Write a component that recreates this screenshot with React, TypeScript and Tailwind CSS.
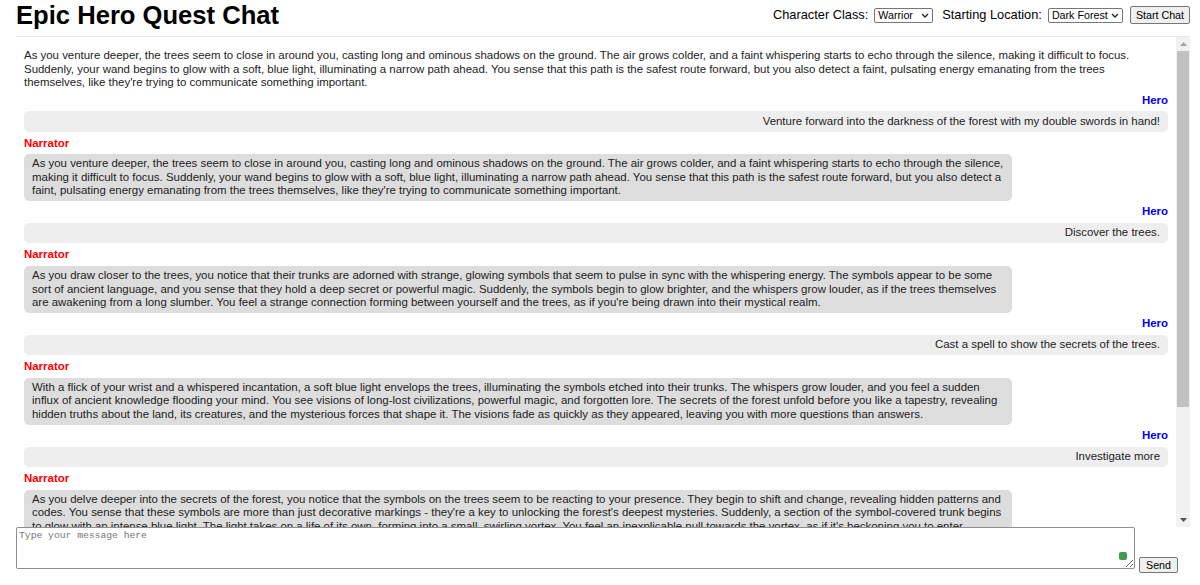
import React, { useState } from "react";

type Message = {
  sender: "hero" | "narrator" | "intro";
  text: string;
};

const opening =
  "As you venture deeper, the trees seem to close in around you, casting long and ominous shadows on the ground. The air grows colder, and a faint whispering starts to echo through the silence, making it difficult to focus. Suddenly, your wand begins to glow with a soft, blue light, illuminating a narrow path ahead. You sense that this path is the safest route forward, but you also detect a faint, pulsating energy emanating from the trees themselves, like they're trying to communicate something important.";

const history: Message[] = [
  { sender: "intro", text: opening },
  {
    sender: "hero",
    text: "Venture forward into the darkness of the forest with my double swords in hand!",
  },
  { sender: "narrator", text: opening },
  { sender: "hero", text: "Discover the trees." },
  {
    sender: "narrator",
    text: "As you draw closer to the trees, you notice that their trunks are adorned with strange, glowing symbols that seem to pulse in sync with the whispering energy. The symbols appear to be some sort of ancient language, and you sense that they hold a deep secret or powerful magic. Suddenly, the symbols begin to glow brighter, and the whispers grow louder, as if the trees themselves are awakening from a long slumber. You feel a strange connection forming between yourself and the trees, as if you're being drawn into their mystical realm.",
  },
  { sender: "hero", text: "Cast a spell to show the secrets of the trees." },
  {
    sender: "narrator",
    text: "With a flick of your wrist and a whispered incantation, a soft blue light envelops the trees, illuminating the symbols etched into their trunks. The whispers grow louder, and you feel a sudden influx of ancient knowledge flooding your mind. You see visions of long-lost civilizations, powerful magic, and forgotten lore. The secrets of the forest unfold before you like a tapestry, revealing hidden truths about the land, its creatures, and the mysterious forces that shape it. The visions fade as quickly as they appeared, leaving you with more questions than answers.",
  },
  { sender: "hero", text: "Investigate more" },
  {
    sender: "narrator",
    text: "As you delve deeper into the secrets of the forest, you notice that the symbols on the trees seem to be reacting to your presence. They begin to shift and change, revealing hidden patterns and codes. You sense that these symbols are more than just decorative markings - they're a key to unlocking the forest's deepest mysteries. Suddenly, a section of the symbol-covered trunk begins to glow with an intense blue light. The light takes on a life of its own, forming into a small, swirling vortex. You feel an inexplicable pull towards the vortex, as if it's beckoning you to enter.",
  },
  { sender: "hero", text: "Step into the vortex." },
  {
    sender: "narrator",
    text: "You take a deep breath and step into the swirling vortex. The world around you dissolves into a blur of light and color, and for a moment you feel weightless, as if you're floating through time itself. When the light fades, you find yourself standing in an ancient clearing, surrounded by towering stone pillars covered in the same glowing symbols.",
  },
];

const ChatMessage = ({ message }: { message: Message }) => {
  if (message.sender === "intro") {
    return <p className="mb-[4px] leading-[13.5px]">{message.text}</p>;
  }

  if (message.sender === "hero") {
    return (
      <div className="mb-[5px] flex flex-col">
        <span className="mb-[4px] text-right font-bold leading-[13.5px] text-[#0000ff]">
          Hero
        </span>
        <div className="rounded-[5px] bg-[#eeeeee] px-2 py-[3.5px] text-right leading-[13.5px]">
          {message.text}
        </div>
      </div>
    );
  }

  return (
    <div className="mb-[4.5px] flex flex-col">
      <span className="mb-[4px] font-bold leading-[13.5px] text-[#ff0000]">
        Narrator
      </span>
      <div className="max-w-[988px] rounded-[5px] bg-[#dddddd] px-2 py-[3.2px] leading-[13.5px]">
        {message.text}
      </div>
    </div>
  );
};

const Chevron = () => (
  <svg
    width="8"
    height="5"
    viewBox="0 0 8 5"
    className="pointer-events-none absolute right-[4px] top-[5px]"
  >
    <path d="M1 1 L4 4 L7 1" fill="none" stroke="#222" strokeWidth="1.3" />
  </svg>
);

interface PickerProps {
  value: string;
  options: string[];
  width: string;
  onChange: (value: string) => void;
}

const Picker = ({ value, options, width, onChange }: PickerProps) => (
  <div className={`relative ${width}`}>
    <select
      value={value}
      onChange={(e) => onChange(e.target.value)}
      className="block h-[15px] w-full appearance-none rounded-[2px] border border-[#767676] bg-white pl-[3px] text-[10.7px] leading-[13px]"
    >
      {options.map((option) => (
        <option key={option}>{option}</option>
      ))}
    </select>
    <Chevron />
  </div>
);

// classic gray scrollbar next to the log
const ScrollRail = () => (
  <div className="flex w-[14px] flex-col bg-[#f1f1f1]">
    <div className="flex h-[14px] items-center justify-center">
      <svg width="7" height="4" viewBox="0 0 7 4">
        <path d="M0 4 L3.5 0 L7 4 Z" fill="#a3a3a3" />
      </svg>
    </div>
    <div className="mx-[1px] h-[356px] bg-[#c1c1c1]" />
    <div className="flex-1" />
    <div className="flex h-[14px] items-center justify-center">
      <svg width="7" height="4" viewBox="0 0 7 4">
        <path d="M0 0 L3.5 4 L7 0 Z" fill="#505050" />
      </svg>
    </div>
  </div>
);

const App = () => {
  const [characterClass, setCharacterClass] = useState<string>("Warrior");
  const [location, setLocation] = useState<string>("Dark Forest");
  const [draft, setDraft] = useState<string>("");

  return (
    <div className="ml-4 mr-[10px] font-['Liberation_Sans',Arial,sans-serif] text-[12.8px] text-[#222222]">
      {/* title bar with game settings */}
      <div className="flex h-[37px] items-center justify-between border-b border-[#e6e6e6] pb-[6px]">
        <h1 className="text-[25.6px] font-bold leading-[29px] text-black">
          Epic Hero Quest Chat
        </h1>
        <div className="flex items-center text-black">
          <label className="mr-[6px]">Character Class:</label>
          <Picker
            value={characterClass}
            options={["Warrior", "Mage", "Rogue"]}
            width="w-[59px]"
            onChange={setCharacterClass}
          />
          <label className="ml-[9px] mr-[6px]">Starting Location:</label>
          <Picker
            value={location}
            options={["Dark Forest", "Castle", "Village"]}
            width="w-[75px]"
            onChange={setLocation}
          />
          <button className="ml-[7px] h-[18px] rounded-[2px] border border-[#767676] bg-[#efefef] px-[5px] text-[10.7px] leading-[12px]">
            Start Chat
          </button>
        </div>
      </div>

      {/* conversation log */}
      <div className="flex h-[490px] text-[11.45px]">
        <div className="flex-1 overflow-hidden px-2 pt-[12px]">
          {history.map((message, index) => (
            <ChatMessage key={index} message={message} />
          ))}
        </div>
        <ScrollRail />
      </div>

      {/* message composer */}
      <div className="flex items-start">
        <div className="relative">
          <textarea
            value={draft}
            onChange={(e) => setDraft(e.target.value)}
            placeholder="Type your message here"
            className="block h-[42px] w-[1119px] rounded-[2px] border border-[#8f8f8f] bg-white px-[2px] py-[2px] font-['Liberation_Mono',monospace] text-[9.7px] leading-[12px] placeholder:text-[#757575]"
          />
          <span className="absolute left-[1103px] top-[25px] h-[8px] w-[8px] rounded-[2px] bg-[#3f9a52]" />
        </div>
        <button className="ml-[4px] mt-[30px] h-[16px] rounded-[2px] border border-[#767676] bg-[#efefef] px-[6px] text-[10.7px] leading-[12px] text-black">
          Send
        </button>
      </div>
    </div>
  );
};

export default App;
